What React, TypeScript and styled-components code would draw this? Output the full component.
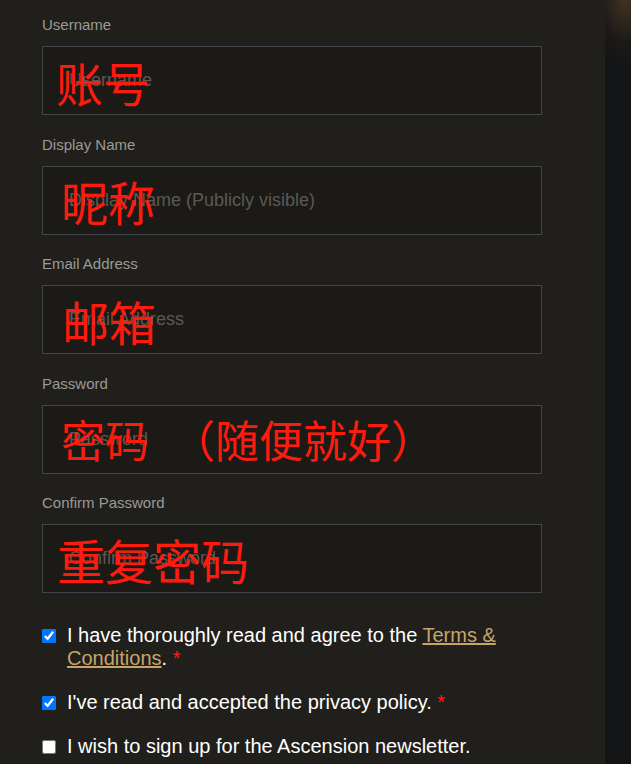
import styled, { createGlobalStyle } from "styled-components";

const GlobalStyle = createGlobalStyle`
  html, body {
    margin: 0;
    padding: 0;
    background: #131416;
  }
  * {
    box-sizing: border-box;
  }
`;

const Page = styled.div`
  display: flex;
  width: 631px;
  height: 764px;
  overflow: hidden;
  font-family: "Liberation Sans", Arial, sans-serif;
`;

const FormPanel = styled.div`
  width: 605px;
  flex-shrink: 0;
  background: #201f1b;
  padding: 16px 0 0 42px;
  display: flex;
  flex-direction: column;
`;

const SidePanel = styled.div`
  flex: 1;
  background:
    radial-gradient(ellipse 40px 70px at 20px 0px, rgba(70, 55, 35, 0.9), rgba(40, 34, 26, 0.4) 60%, transparent 100%),
    #131416;
`;

const Fields = styled.div`
  display: flex;
  flex-direction: column;
  gap: 20.5px;
`;

const Field = styled.div`
  display: flex;
  flex-direction: column;
`;

const Label = styled.label`
  font-size: 15px;
  line-height: 17px;
  color: #9a9a98;
  margin-bottom: 13px;
`;

const InputWrap = styled.div`
  position: relative;
  width: 500px;
  height: 69px;
`;

const Input = styled.input`
  width: 100%;
  height: 100%;
  background: #1b1a17;
  border: 1px solid #41444b;
  border-radius: 0;
  padding: 0 26px;
  font-family: "Liberation Sans", Arial, sans-serif;
  font-size: 18px;
  color: #ddd;
  outline: none;

  &::placeholder {
    color: #5a5954;
  }
`;

const Note = styled.span<{ $left: number; $size: number }>`
  position: absolute;
  top: 50%;
  left: ${(p) => p.$left}px;
  transform: translateY(-50%);
  display: flex;
  align-items: center;
  font-family: "Noto Sans CJK SC", sans-serif;
  font-size: ${(p) => p.$size}px;
  line-height: 1;
  color: #ff1a0e;
  pointer-events: none;
  white-space: nowrap;
`;

const Paren = styled.span<{ $side: "open" | "close" }>`
  display: inline-flex;
  justify-content: ${(p) => (p.$side === "open" ? "flex-end" : "flex-start")};
  width: ${(p) => (p.$side === "open" ? "1.5em" : "0.6em")};
  overflow: visible;
`;

const Checks = styled.div`
  display: flex;
  flex-direction: column;
  gap: 21px;
  margin-top: 31px;
`;

const CheckRow = styled.label`
  display: flex;
  align-items: flex-start;
  gap: 11px;
  font-size: 20px;
  line-height: 23px;
  color: #ffffff;
  width: 480px;
`;

const Box = styled.input`
  width: 14px;
  height: 14px;
  margin: 5px 0 0 0;
  flex-shrink: 0;
`;

const Link = styled.a`
  color: #c8a468;
  text-decoration: underline;
`;

const Required = styled.span`
  color: #ff1a1a;
`;

const fields = [
  { label: "Username", placeholder: "Username", type: "text", note: <>账号</>, left: 14, size: 47 },
  { label: "Display Name", placeholder: "Display Name (Publicly visible)", type: "text", note: <>昵称</>, left: 19, size: 47 },
  { label: "Email Address", placeholder: "Email Address", type: "email", note: <>邮箱</>, left: 20, size: 47 },
  {
    label: "Password",
    placeholder: "Password",
    type: "password",
    note: (
      <>
        <span>密码</span>
        <Paren $side="open">（</Paren>
        <span>随便就好</span>
        <Paren $side="close">）</Paren>
      </>
    ),
    left: 19,
    size: 44,
  },
  { label: "Confirm Password", placeholder: "Confirm Password", type: "password", note: <>重复密码</>, left: 15, size: 48 },
];

export default function App() {
  return (
    <>
      <GlobalStyle />
      <Page>
        <FormPanel>
          <Fields>
            {fields.map((f) => (
              <Field key={f.label}>
                <Label>{f.label}</Label>
                <InputWrap>
                  <Input type={f.type} placeholder={f.placeholder} />
                  <Note $left={f.left} $size={f.size}>{f.note}</Note>
                </InputWrap>
              </Field>
            ))}
          </Fields>
          <Checks>
            <CheckRow>
              <Box type="checkbox" defaultChecked />
              <span>
                I have thoroughly read and agree to the <Link href="#">Terms &amp; Conditions</Link>.{" "}
                <Required>*</Required>
              </span>
            </CheckRow>
            <CheckRow>
              <Box type="checkbox" defaultChecked />
              <span>
                I've read and accepted the privacy policy. <Required>*</Required>
              </span>
            </CheckRow>
            <CheckRow>
              <Box type="checkbox" />
              <span>I wish to sign up for the Ascension newsletter.</span>
            </CheckRow>
          </Checks>
        </FormPanel>
        <SidePanel />
      </Page>
    </>
  );
}
